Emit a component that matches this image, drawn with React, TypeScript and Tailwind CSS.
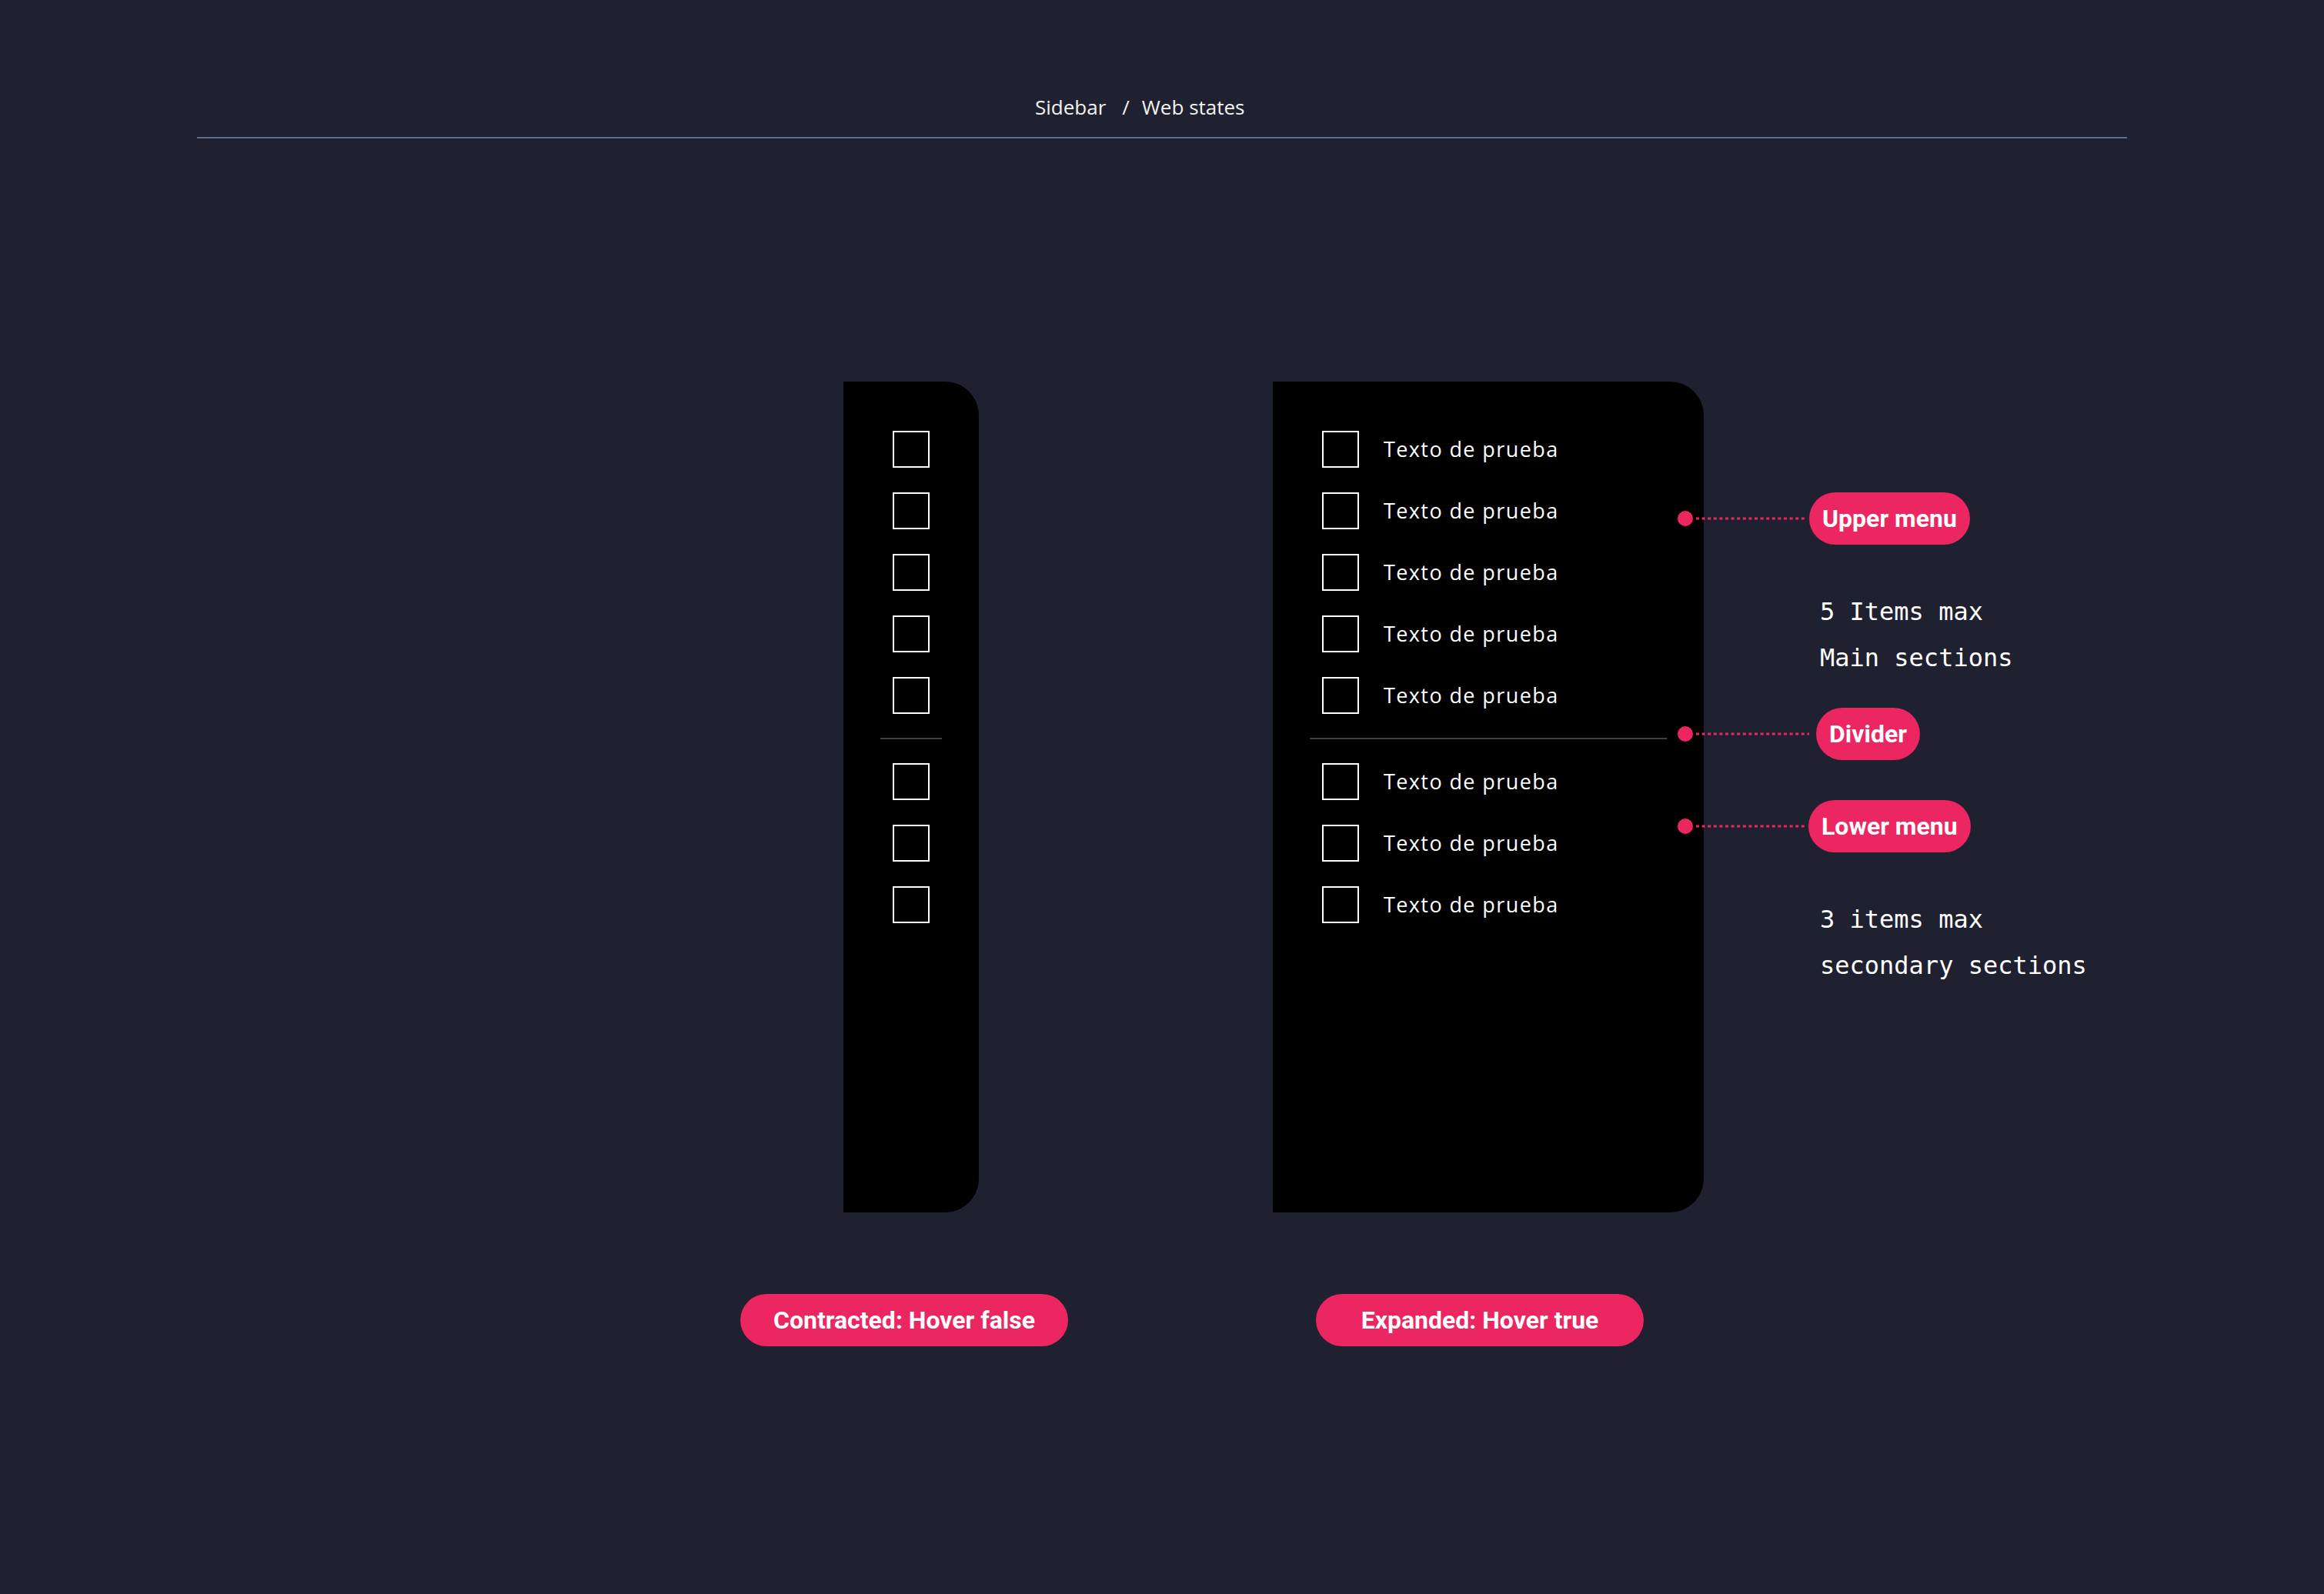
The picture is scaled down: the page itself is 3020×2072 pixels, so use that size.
import React from "react";

const upperItems = [1, 2, 3, 4, 5];
const lowerItems = [1, 2, 3];

function NavIcon() {
  return <div className="w-12 h-12 shrink-0 border-2 border-white" />;
}

function Divider() {
  return <div className="mx-12 my-[15px] h-[2px] bg-[#3a4152]" />;
}

function ContractedSidebar() {
  return (
    <div className="w-[176px] h-[1080px] shrink-0 bg-black rounded-r-[44px] pt-12">
      {upperItems.map((i) => (
        <div key={i} className="h-20 flex items-center pl-16">
          <NavIcon />
        </div>
      ))}
      <Divider />
      {lowerItems.map((i) => (
        <div key={i} className="h-20 flex items-center pl-16">
          <NavIcon />
        </div>
      ))}
    </div>
  );
}

function ExpandedSidebar() {
  const row = (i: number) => (
    <div key={i} className="h-20 flex items-center pl-16 gap-8">
      <NavIcon />
      <span className="text-[27px] font-medium tracking-[1.4px] text-white font-['Open_Sans',sans-serif]">
        Texto de prueba
      </span>
    </div>
  );
  return (
    <div className="w-[560px] h-[1080px] shrink-0 bg-black rounded-r-[44px] pt-12">
      {upperItems.map(row)}
      <Divider />
      {lowerItems.map(row)}
    </div>
  );
}

function Pill({ children, className = "" }: { children: React.ReactNode; className?: string }) {
  return (
    <div
      className={`h-[68px] flex items-center justify-center rounded-full bg-[#ec2660] text-white text-[32px] font-bold font-['Roboto',sans-serif] ${className}`}
    >
      {children}
    </div>
  );
}

function Callout({ label, lineWidth, pillGap, className = "" }: { label: string; lineWidth: number; pillGap: string; className?: string }) {
  return (
    <div className={`flex items-center h-[68px] ${className}`}>
      <div className="w-5 h-5 rounded-full bg-[#ec2660] shrink-0" />
      <svg className="ml-1 shrink-0" width={lineWidth} height="4">
        <line x1="0" y1="2" x2={lineWidth} y2="2" stroke="#ec2660" strokeWidth="3" strokeDasharray="4 3.6" />
      </svg>
      <Pill className={`px-[17px] ${pillGap}`}>{label}</Pill>
    </div>
  );
}

function Note({ lines, className = "" }: { lines: string[]; className?: string }) {
  return (
    <div className={`ml-[185px] text-[32px] leading-[60px] text-white font-['DejaVu_Sans_Mono',monospace] whitespace-pre ${className}`}>
      {lines.map((l) => (
        <div key={l}>{l}</div>
      ))}
    </div>
  );
}

export default function App() {
  return (
    <div className="min-h-screen w-full bg-[#202130]">
      <header className="mx-[256px] pt-[126px] pb-[26px] border-b-2 border-[#5e6a8e]">
        <div className="pl-[1089px] flex items-center text-[26px] leading-none text-[#f2f2f2] font-['Open_Sans',sans-serif]">
          <span>Sidebar</span>
          <span className="ml-[21px]">/</span>
          <span className="ml-4">Web states</span>
        </div>
      </header>

      <div className="mt-[316px] flex items-start pl-[1096px]">
        <ContractedSidebar />
        <div className="ml-[382px] flex items-start">
          <ExpandedSidebar />
          <div className="relative -ml-[34px] flex flex-col">
            <Callout label="Upper menu" lineWidth={143} pillGap="ml-1" className="mt-[144px]" />
            <Note lines={["5 Items max", "Main sections"]} className="mt-[57px]" />
            <Callout label="Divider" lineWidth={147} pillGap="ml-[9px]" className="mt-[35px]" />
            <Callout label="Lower menu" lineWidth={142} pillGap="ml-1" className="mt-[52px]" />
            <Note lines={["3 items max", "secondary sections"]} className="mt-[57px]" />
          </div>
        </div>
      </div>

      <div className="mt-[106px] flex pl-[962px] gap-[322px]">
        <Pill className="w-[426px]">Contracted: Hover false</Pill>
        <Pill className="w-[426px]">Expanded: Hover true</Pill>
      </div>
    </div>
  );
}
